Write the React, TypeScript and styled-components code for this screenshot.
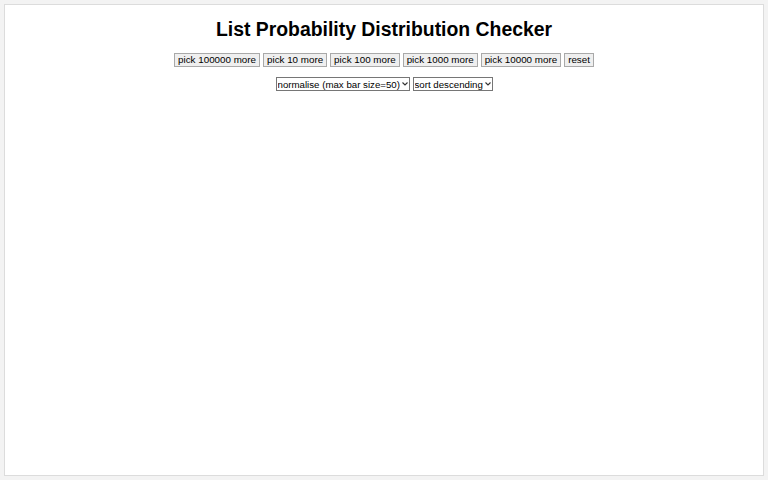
import styled, { createGlobalStyle } from "styled-components";

const GlobalStyle = createGlobalStyle`
  html, body {
    margin: 0;
    padding: 0;
    background: #f3f3f3;
  }
  body {
    font-family: "Liberation Sans", Arial, sans-serif;
  }
`;

const Page = styled.div`
  padding: 4px;
  height: 480px;
  box-sizing: border-box;
`;

const Panel = styled.div`
  background: #fff;
  border: 1px solid #dcdcdc;
  height: 100%;
  box-sizing: border-box;
  display: flex;
  flex-direction: column;
  align-items: center;
`;

const Title = styled.h1`
  margin: 13px 0 0;
  font-size: 19.4px;
  font-weight: bold;
  color: #000;
  line-height: 22px;
`;

const Row = styled.div<{ $top: number }>`
  display: flex;
  gap: 3px;
  justify-content: center;
  margin-top: ${(p) => p.$top}px;
`;

const Button = styled.button`
  font-family: "Liberation Sans", Arial, sans-serif;
  font-size: 9.8px;
  line-height: 12px;
  height: 14px;
  padding: 0 3px;
  background: #efefef;
  color: #000;
  border: 1px solid #a9a9a9;
  border-radius: 0;
`;

const SelectWrap = styled.div`
  position: relative;
  display: inline-flex;

  svg {
    position: absolute;
    right: 2px;
    top: 5px;
    pointer-events: none;
  }
`;

const Select = styled.select`
  appearance: none;
  font-family: "Liberation Sans", Arial, sans-serif;
  font-size: 9.7px;
  height: 14px;
  padding: 0 8px 0 1px;
  background: #fff;
  color: #000;
  border: 1px solid #767676;
  border-radius: 0;
`;

const Chevron = () => (
  <svg width="6" height="4" viewBox="0 0 6 4">
    <path d="M0.5 0.5 L3 3 L5.5 0.5" fill="none" stroke="#333" strokeWidth="1.1" />
  </svg>
);

const picks = [100000, 10, 100, 1000, 10000];

export default function App() {
  return (
    <>
      <GlobalStyle />
      <Page>
        <Panel>
          <Title>List Probability Distribution Checker</Title>
          <Row $top={13}>
            {picks.map((n) => (
              <Button key={n}>pick {n} more</Button>
            ))}
            <Button>reset</Button>
          </Row>
          <Row $top={10}>
            <SelectWrap>
              <Select defaultValue="norm">
                <option value="norm">normalise (max bar size=50)</option>
                <option value="raw">raw counts</option>
              </Select>
              <Chevron />
            </SelectWrap>
            <SelectWrap>
              <Select defaultValue="desc">
                <option value="desc">sort descending</option>
                <option value="asc">sort ascending</option>
              </Select>
              <Chevron />
            </SelectWrap>
          </Row>
        </Panel>
      </Page>
    </>
  );
}
